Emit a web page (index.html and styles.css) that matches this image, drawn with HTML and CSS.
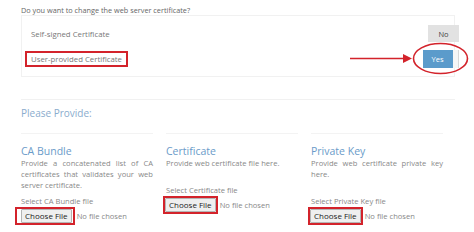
FILE: index.html
```html
<!DOCTYPE html>
<html>
<head>
<meta charset="utf-8">
<link rel="stylesheet" href="styles.css">
</head>
<body>
<div class="page">
  <div class="question">Do you want to change the web server certificate?</div>
  <div class="panel">
    <div class="row">
      <span class="opt">Self-signed Certificate</span>
      <span class="btn no">No</span>
    </div>
    <div class="row">
      <span class="opt marked">User-provided Certificate</span>
      <span class="btn yes">Yes</span>
    </div>
  </div>
  <div class="sep"></div>
  <div class="please">Please Provide:</div>
  <div class="cols">
    <div class="col">
      <div class="head">CA Bundle</div>
      <p class="desc">Provide a concatenated list of CA certificates that validates your web server certificate.</p>
      <div class="label">Select CA Bundle file</div>
      <div class="file"><span class="pick pick-wide"><button class="choose">Choose File</button></span><span class="none">No file chosen</span></div>
    </div>
    <div class="col">
      <div class="head">Certificate</div>
      <p class="desc desc-2">Provide web certificate file here.</p>
      <div class="label">Select Certificate file</div>
      <div class="file"><span class="pick"><button class="choose">Choose File</button></span><span class="none">No file chosen</span></div>
    </div>
    <div class="col">
      <div class="head">Private Key</div>
      <p class="desc desc-3">Provide web certificate private key here.</p>
      <div class="label">Select Private Key file</div>
      <div class="file"><span class="pick"><button class="choose">Choose File</button></span><span class="none">No file chosen</span></div>
    </div>
  </div>
  <svg class="annot" width="474" height="232" viewBox="0 0 474 232">
    <ellipse cx="440.5" cy="58.5" rx="27" ry="15" fill="none" stroke="#d3232b" stroke-width="1.6"/>
    <line x1="350" y1="58.5" x2="404" y2="58.5" stroke="#d3232b" stroke-width="1.6"/>
    <polygon points="403,54 412,58.5 403,63" fill="#d3232b"/>
  </svg>
</div>
</body>
</html>
```
FILE: styles.css
```css
html, body {
  margin: 0;
  padding: 0;
  background: #ffffff;
}
.page {
  position: relative;
  width: 474px;
  height: 232px;
  box-sizing: border-box;
  padding: 0 19px 0 21px;
  overflow: hidden;
  font-family: "Open Sans", "Noto Sans", sans-serif;
  color: #777;
}
.question {
  height: 15px;
  line-height: 20px;
  font-size: 7.3px;
  color: #666;
  white-space: nowrap;
}
.panel {
  border: 1px solid #f1f1f1;
  padding: 9px 0 8px 9px;
  display: flex;
  flex-direction: column;
  gap: 8px;
}
.row {
  display: flex;
  justify-content: space-between;
  align-items: center;
}
.opt {
  font-size: 7.8px;
  color: #777;
  line-height: 10px;
}
.marked {
  border: 2px solid #d3232b;
  padding: 1px 4px;
  margin-left: -6px;
}
.btn {
  display: flex;
  align-items: center;
  justify-content: center;
  font-size: 7.5px;
  box-sizing: border-box;
}
.no {
  width: 31px;
  height: 17px;
  background: #e2e2e2;
  color: #444;
  margin-right: -5px;
}
.yes {
  width: 35px;
  height: 18px;
  background: #5b9bcb;
  color: #fff;
  border-right: 5px solid #f6f6f6;
  box-shadow: 1px 0 0 #d8d8d8;
  margin-right: -4px;
  padding-right: 1px;
}
.sep {
  margin-top: 22px;
  height: 1px;
  background: #f1f1f1;
}
.please {
  height: 33px;
  line-height: 26px;
  font-size: 10px;
  color: #8aaccd;
}
.cols {
  display: grid;
  grid-template-columns: 132px 132px 132px;
  column-gap: 13px;
}
.col {
  border-top: 1px solid #f3f3f3;
}
.head {
  padding-top: 10px;
  line-height: 14px;
  font-size: 10.5px;
  color: #6a9bc9;
}
.desc {
  margin: 0;
  font-size: 7.6px;
  line-height: 11px;
  color: #888;
  text-align: justify;
}
.desc-2 { min-height: 22px; }
.desc-3 { min-height: 33px; }
.label {
  margin-top: 4.5px;
  font-size: 7.6px;
  line-height: 11px;
  color: #888;
}
.file {
  display: flex;
  align-items: center;
}
.pick {
  display: flex;
  border: 2px solid #d3232b;
  height: 18px;
  box-sizing: border-box;
  margin-left: -3px;
  padding: 0;
}
.pick-wide {
  margin-left: -6px;
  padding-left: 4px;
  padding-right: 1px;
}
.choose {
  margin: 0;
  padding: 0 3px;
  height: 14px;
  font-family: "Open Sans", "Noto Sans", sans-serif;
  font-size: 8px;
  line-height: 12px;
  color: #222;
  background: #efefef;
  border: 1px solid #b5b5b5;
  border-radius: 1px;
}
.none {
  margin-left: 2px;
  font-size: 7.6px;
  color: #888;
}
.annot {
  position: absolute;
  left: 0;
  top: 0;
  pointer-events: none;
}
```
